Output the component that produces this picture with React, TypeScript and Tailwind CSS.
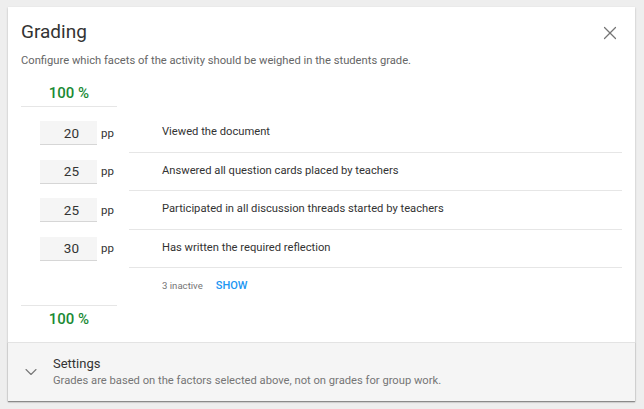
import { ChevronDown, X } from "lucide-react"

const criteria = [
  { points: 20, label: "Viewed the document" },
  { points: 25, label: "Answered all question cards placed by teachers" },
  { points: 25, label: "Participated in all discussion threads started by teachers" },
  { points: 30, label: "Has written the required reflection" },
]

function Total() {
  return (
    <div className="w-[96px] text-center text-[15px] font-medium leading-[24px] text-[#1a8a34]">
      100 %
    </div>
  )
}

function CriterionRow({ points, label }: { points: number; label: string }) {
  return (
    <div className="flex h-[38.5px] items-stretch">
      <div className="flex w-[108px] items-center">
        <div className="ml-[19px] flex h-[24px] w-[57px] items-center justify-end border-b border-[#d6d6d6] bg-[#f5f5f5] pr-[18px] text-[13.5px] text-[#333]">
          {points}
        </div>
        <span className="ml-[4px] text-[11.5px] text-[#333]">pp</span>
      </div>
      <div className="flex flex-1 items-center border-b border-[#e6e6e6] pl-[33px] text-[11.2px] text-[#333]">
        {label}
      </div>
    </div>
  )
}

export default function App() {
  return (
    <div
      className="min-h-[409px] bg-[#eeeeee] pl-[8px] pr-[9px] pt-[7px]"
      style={{ fontFamily: "Roboto, 'Liberation Sans', sans-serif" }}
    >
      <div className="flex h-[394px] flex-col bg-white shadow-[0_1px_2px_rgba(0,0,0,0.25)]">
        {/* Header */}
        <div className="relative px-[13px] pt-[13px]">
          <h1 className="text-[19px] leading-[24px] text-[#333]">Grading</h1>
          <button className="absolute right-[14px] top-[15px] text-[#757575]">
            <X size={22} strokeWidth={1.3} />
          </button>
          <p className="mt-[9px] text-[11.2px] leading-[16px] text-[#666]">
            Configure which facets of the activity should be weighed in the students grade.
          </p>
        </div>

        {/* Criteria */}
        <div className="flex-1 pl-[13px] pr-[13px]">
          <div className="mt-[12px] w-[96px] border-b border-[#e6e6e6] pb-[1px]">
            <Total />
          </div>
          <div className="mt-[7px]">
            {criteria.map((c) => (
              <CriterionRow key={c.label} points={c.points} label={c.label} />
            ))}
            <div className="flex h-[37px] items-center">
              <div className="w-[108px]" />
              <span className="pl-[33px] text-[9.6px] text-[#757575]">3 inactive</span>
              <button className="ml-[13px] text-[11px] font-medium text-[#2196f3]">SHOW</button>
            </div>
          </div>
          <div className="w-[96px] border-t border-[#e6e6e6] pt-[1px]">
            <Total />
          </div>
        </div>

        {/* Settings */}
        <div className="flex h-[59px] items-center border-t border-[#e3e3e3] bg-[#f5f5f5] shadow-[0_1px_1px_rgba(0,0,0,0.3)]">
          <div className="flex w-[45px] justify-center">
            <ChevronDown size={20} strokeWidth={1.3} className="text-[#777]" />
          </div>
          <div className="flex flex-col">
            <span className="text-[13px] leading-[18px] text-[#333]">Settings</span>
            <span className="text-[11.2px] leading-[16px] text-[#757575]">
              Grades are based on the factors selected above, not on grades for group work.
            </span>
          </div>
        </div>
      </div>
    </div>
  )
}
